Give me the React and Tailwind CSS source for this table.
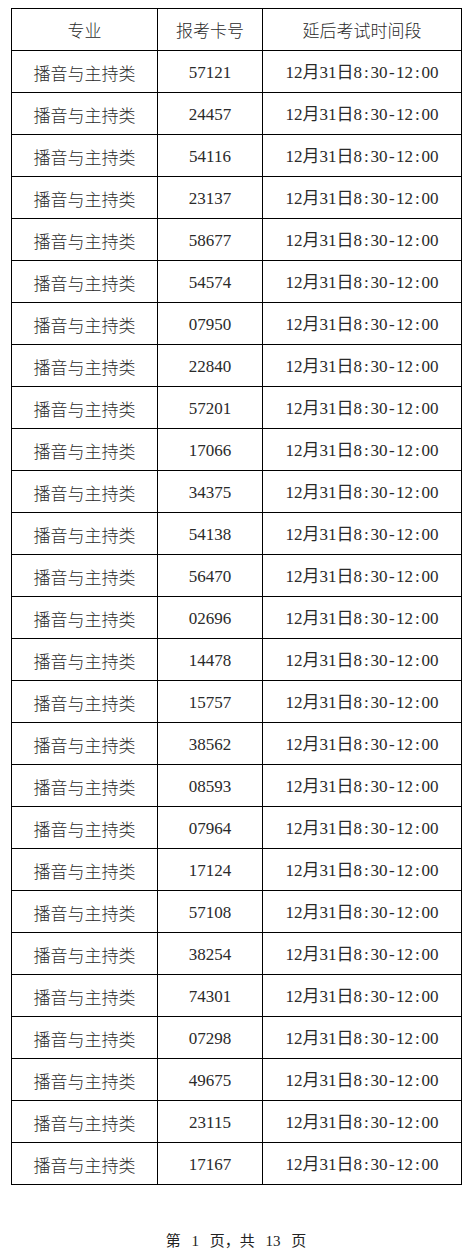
import React from "react";

const ids = [
  "57121","24457","54116","23137","58677","54574","07950","22840","57201","17066",
  "34375","54138","56470","02696","14478","15757","38562","08593","07964","17124",
  "57108","38254","74301","07298","49675","23115","17167",
];

const serif = "font-['Liberation_Serif','Noto_Sans_CJK_SC',serif]";
const cjk = "font-['Noto_Sans_CJK_SC',sans-serif]";

function Sep({ c }) {
  return <span className="inline-block w-[0.5em] text-center">{c}</span>;
}

function TimeText() {
  return (
    <span className={`${serif} text-[17px]`}>
      12月31日8<Sep c=":" />30<Sep c="-" />12<Sep c=":" />00
    </span>
  );
}

export default function App() {
  const cell = "border border-black p-0 h-[42px] text-center align-middle";
  return (
    <div className="w-[474px] min-h-[1259px] bg-white pt-[8px] pl-[11px] text-[#2a2a2a]">
      <table className="border-collapse table-fixed w-[450px]">
        <colgroup>
          <col className="w-[146px]" />
          <col className="w-[105px]" />
          <col className="w-[199px]" />
        </colgroup>
        <thead>
          <tr>
            <th className={`${cell} ${cjk} font-light text-[17px]`}>专业</th>
            <th className={`${cell} ${cjk} font-light text-[17px]`}>报考卡号</th>
            <th className={`${cell} ${cjk} font-light text-[17px]`}>延后考试时间段</th>
          </tr>
        </thead>
        <tbody>
          {ids.map((id, i) => (
            <tr key={i}>
              <td className={`${cell} ${cjk} font-light text-[17px] pt-[3px]`}>播音与主持类</td>
              <td className={`${cell} ${serif} text-[17px] pt-[3px]`}>{id}</td>
              <td className={`${cell} pt-[3px]`}>
                <TimeText />
              </td>
            </tr>
          ))}
        </tbody>
      </table>
      <div
        className={`w-[450px] mt-[46px] text-center text-[15px] leading-[20px] ${serif} text-[#222] [word-spacing:7px]`}
      >
        第 1 页，共 13 页
      </div>
    </div>
  );
}
